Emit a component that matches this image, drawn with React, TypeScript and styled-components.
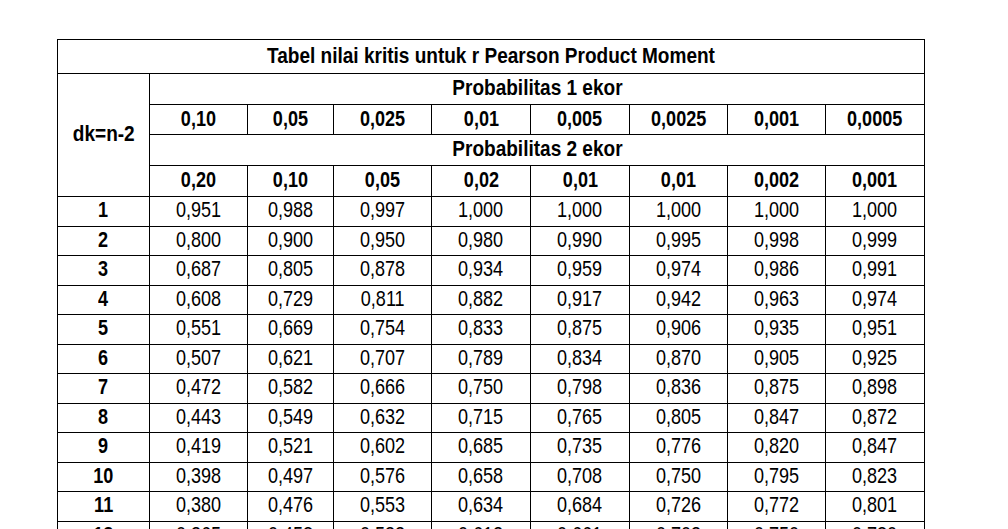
import React from "react";
import styled, { createGlobalStyle } from "styled-components";

const GlobalStyle = createGlobalStyle`
  html, body {
    margin: 0;
    padding: 0;
    background: #ffffff;
  }
  body {
    font-family: "Liberation Sans", Arial, sans-serif;
    color: #000000;
  }
`;

const Page = styled.div`
  width: 1008px;
  height: 529px;
  overflow: hidden;
  padding: 39px 0 0 57px;
  box-sizing: border-box;
`;

const Table = styled.table`
  border-collapse: collapse;
  table-layout: fixed;
  width: 868px;
  font-family: "Liberation Sans", Arial, sans-serif;
`;

const Cell = styled.td<{ $bold?: boolean; $h?: number }>`
  border: 1px solid #000;
  padding: 0 0 2px;
  text-align: center;
  vertical-align: middle;
  font-size: 22px;
  line-height: 1;
  white-space: nowrap;
  font-weight: ${({ $bold }) => ($bold ? 700 : 400)};
  height: ${({ $h }) => ($h ? `${$h}px` : "auto")};
  box-sizing: border-box;
`;

// Arial Narrow look: Liberation Sans squeezed horizontally
const Narrow = styled.span<{ $wide?: boolean }>`
  display: inline-block;
  transform: scaleX(${({ $wide }) => ($wide ? 0.865 : 0.82)});
  transform-origin: center;
`;

const DataRow = styled.tr`
  height: 29.5px;
`;

const colWidths = [92, 98, 86, 98, 99, 99, 98, 98, 99];

const oneTail = ["0,10", "0,05", "0,025", "0,01", "0,005", "0,0025", "0,001", "0,0005"];
const twoTail = ["0,20", "0,10", "0,05", "0,02", "0,01", "0,01", "0,002", "0,001"];

const rows: string[][] = [
  ["0,951", "0,988", "0,997", "1,000", "1,000", "1,000", "1,000", "1,000"],
  ["0,800", "0,900", "0,950", "0,980", "0,990", "0,995", "0,998", "0,999"],
  ["0,687", "0,805", "0,878", "0,934", "0,959", "0,974", "0,986", "0,991"],
  ["0,608", "0,729", "0,811", "0,882", "0,917", "0,942", "0,963", "0,974"],
  ["0,551", "0,669", "0,754", "0,833", "0,875", "0,906", "0,935", "0,951"],
  ["0,507", "0,621", "0,707", "0,789", "0,834", "0,870", "0,905", "0,925"],
  ["0,472", "0,582", "0,666", "0,750", "0,798", "0,836", "0,875", "0,898"],
  ["0,443", "0,549", "0,632", "0,715", "0,765", "0,805", "0,847", "0,872"],
  ["0,419", "0,521", "0,602", "0,685", "0,735", "0,776", "0,820", "0,847"],
  ["0,398", "0,497", "0,576", "0,658", "0,708", "0,750", "0,795", "0,823"],
  ["0,380", "0,476", "0,553", "0,634", "0,684", "0,726", "0,772", "0,801"],
  ["0,365", "0,458", "0,532", "0,612", "0,661", "0,703", "0,750", "0,780"],
];

export default function App() {
  return (
    <>
      <GlobalStyle />
      <Page>
        <Table>
          <colgroup>
            {colWidths.map((w, i) => (
              <col key={i} style={{ width: w }} />
            ))}
          </colgroup>
          <tbody>
            <tr>
              <Cell $bold $h={34} colSpan={9}>
                <Narrow $wide>Tabel nilai kritis untuk r Pearson Product Moment</Narrow>
              </Cell>
            </tr>
            <tr>
              <Cell $bold rowSpan={4}>
                <Narrow $wide>dk=n-2</Narrow>
              </Cell>
              <Cell $bold $h={31} colSpan={8}>
                <Narrow $wide>Probabilitas 1 ekor</Narrow>
              </Cell>
            </tr>
            <tr>
              {oneTail.map((v, i) => (
                <Cell $bold $h={30} key={i}>
                  <Narrow>{v}</Narrow>
                </Cell>
              ))}
            </tr>
            <tr>
              <Cell $bold $h={31} colSpan={8}>
                <Narrow $wide>Probabilitas 2 ekor</Narrow>
              </Cell>
            </tr>
            <tr>
              {twoTail.map((v, i) => (
                <Cell $bold $h={31} key={i}>
                  <Narrow>{v}</Narrow>
                </Cell>
              ))}
            </tr>
            {rows.map((r, i) => (
              <DataRow key={i}>
                <Cell $bold>
                  <Narrow>{i + 1}</Narrow>
                </Cell>
                {r.map((v, j) => (
                  <Cell key={j}>
                    <Narrow>{v}</Narrow>
                  </Cell>
                ))}
              </DataRow>
            ))}
          </tbody>
        </Table>
      </Page>
    </>
  );
}
